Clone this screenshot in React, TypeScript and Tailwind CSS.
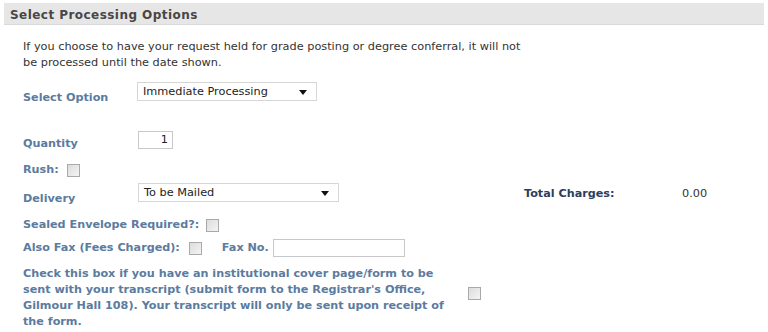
import React from 'react';

const font = { fontFamily: '"DejaVu Sans", Verdana, sans-serif' };

function Checkbox({ className = '' }: { className?: string }) {
  return (
    <span
      className={`inline-block h-[13px] w-[13px] shrink-0 border border-[#a9a9a9] bg-gradient-to-br from-[#dcdcdc] to-[#f4f4f4] ${className}`}
    />
  );
}

function FakeSelect({ value, width }: { value: string; width: string }) {
  return (
    <div
      className={`flex h-[19px] items-center justify-between border border-[#d6d6d6] bg-white pl-[5px] pr-[9px] pt-[1px] text-[11.3px] text-[#222] ${width}`}
    >
      <span>{value}</span>
      <svg width="8" height="5" viewBox="0 0 8 5">
        <path d="M0 0h8L4 5z" fill="#111" />
      </svg>
    </div>
  );
}

const label = 'text-[11.2px] font-bold leading-[16px] text-[#5b7b9f]';

export default function App() {
  return (
    <div className="h-[332px] w-[768px] overflow-hidden bg-white" style={font}>
      {/* section header */}
      <div className="mx-[4px] mt-[3px] flex h-[22px] items-center border-b border-[#d9d9d9] bg-[#e6e6e6] pl-[6px] pt-[2px] text-[12px] font-bold tracking-[0.45px] text-[#474747]">
        Select Processing Options
      </div>

      <div className="pl-[23px]">
        <p className="mt-[14px] whitespace-nowrap text-[11.3px] leading-[16px] text-[#333]">
          If you choose to have your request held for grade posting or degree conferral, it will not
          <br />
          be processed until the date shown.
        </p>

        {/* select option */}
        <div className="mt-[11px] flex">
          <div className={`w-[114px] pt-[8px] ${label}`}>Select Option</div>
          <FakeSelect value="Immediate Processing" width="w-[180px]" />
        </div>

        {/* quantity */}
        <div className="mt-[25px] flex">
          <div className={`w-[115px] pt-[5px] ${label}`}>Quantity</div>
          <div className="flex h-[18px] w-[35px] items-center justify-end border border-[#c8c8c8] pr-[4px] text-[11.3px] text-[#222]">
            1
          </div>
        </div>

        {/* rush */}
        <div className={`mt-[10px] flex items-center ${label}`}>
          <span>Rush:</span>
          <Checkbox className="ml-[8px]" />
        </div>

        {/* delivery */}
        <div className="mt-[5px] flex">
          <div className={`w-[115px] pt-[8px] ${label}`}>Delivery</div>
          <FakeSelect value="To be Mailed" width="w-[201px]" />
          <div className="ml-[185px] w-[158px] pt-[3px] text-[11.2px] font-bold leading-[16px] text-[#2e3d5c]">
            Total Charges:
          </div>
          <div className="pt-[3px] text-[11.3px] leading-[16px] text-[#333]">0.00</div>
        </div>

        {/* sealed */}
        <div className={`mt-[10px] flex items-center ${label}`}>
          <span>Sealed Envelope Required?:</span>
          <Checkbox className="ml-[7px]" />
        </div>

        {/* fax */}
        <div className={`mt-[6px] flex items-center ${label}`}>
          <span>Also Fax (Fees Charged):</span>
          <Checkbox className="ml-[9px]" />
          <span className="ml-[20px]">Fax No.</span>
          <div className="ml-[4px] h-[18px] w-[132px] border border-[#c8c8c8] bg-white" />
        </div>

        {/* cover page */}
        <div className="mt-[9px] flex items-center">
          <p className={`w-[420px] whitespace-nowrap ${label}`}>
            Check this box if you have an institutional cover page/form to be
            <br />
            sent with your transcript (submit form to the Registrar's Office,
            <br />
            Gilmour Hall 108). Your transcript will only be sent upon receipt of
            <br />
            the form.
          </p>
          <Checkbox className="mb-[10px] ml-[25px]" />
        </div>
      </div>
    </div>
  );
}
